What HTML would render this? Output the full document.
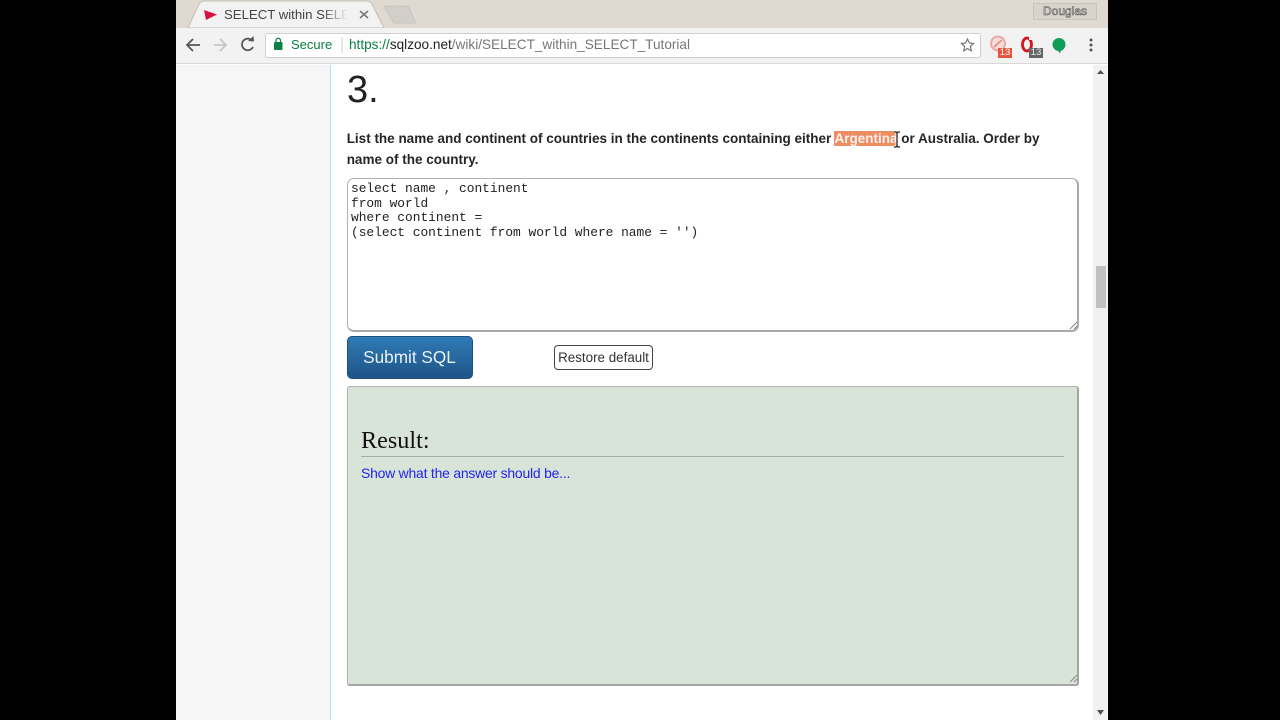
<!DOCTYPE html>
<html><head><meta charset="utf-8">
<style>
html,body{margin:0;padding:0;width:1280px;height:720px;background:#000;overflow:hidden}
div,span,a{position:absolute;white-space:nowrap;box-sizing:border-box}
body{font-family:"Liberation Sans",sans-serif;color:#222}
svg{position:absolute;overflow:visible}
</style></head><body>
<div style="left:176px;top:0;width:932px;height:720px;background:#fff;overflow:hidden">
 <!-- title bar -->
 <div style="left:0;top:0;width:932px;height:28px;background:#dfd9d1"></div>
 <svg style="left:0;top:0" width="932" height="30">
  <path d="M12 28 L22 6 Q24 1 28 1 L191 1 Q195 1 197 6 L208 28 Z" fill="#f2f2f2" stroke="#c4bfb8" stroke-width="1"/>
  <path d="M208 7 Q209 6 212 6 L232 6 L240 23 L218 23 Z" fill="#d2cec9" stroke="#c9c5bf"/>
  <path d="M28 10 L41 14.5 L30 20 Z" fill="#d8123f"/>
  <path d="M184 11 L192 18 M192 11 L184 18" stroke="#777" stroke-width="1.5"/>
 </svg>
 <div style="left:48px;top:6px;width:128px;height:17px;font-size:13.2px;line-height:17px;color:#444;overflow:hidden">SELECT within SELECT Tutorial</div>
 <div style="left:146px;top:5px;width:30px;height:20px;background:linear-gradient(90deg,rgba(242,242,242,0),#f2f2f2 85%)"></div>
 <div style="left:857px;top:3px;width:64px;height:17px;background:#d9d3cb;border:1px solid #c9c3bb;font-size:12px;line-height:15px;text-align:center;color:#f3f0ec;-webkit-text-stroke:.6px #555">Douglas</div>
 <!-- toolbar -->
 <div style="left:0;top:28px;width:932px;height:36px;background:#f2f2f2;border-bottom:1px solid #d8d8d8"></div>
 <svg style="left:0;top:28px" width="932" height="35">
  <path d="M24 17 H11 M17 11 L11 17 L17 23" fill="none" stroke="#555" stroke-width="1.8"/>
  <path d="M38 17 H50 M44 11 L50 17 L44 23" fill="none" stroke="#c6c6c6" stroke-width="1.8"/>
  <path d="M76.5 13 A5.8 5.8 0 1 0 77 19" fill="none" stroke="#555" stroke-width="1.8"/>
  <path d="M72 13 L78 13.5 L77.5 8 Z" fill="#555"/>
 </svg>
 <div style="left:89px;top:33px;width:716px;height:25px;background:#fff;border:1px solid #cfcfcf;border-radius:3px"></div>
 <svg style="left:0;top:28px" width="932" height="35">
  <rect x="98" y="14" width="8.5" height="8" rx="1" fill="#0b8043"/>
  <path d="M100 14 V12.5 A2.2 2.2 0 0 1 104.5 12.5 V14" fill="none" stroke="#0b8043" stroke-width="1.2"/>
  <path d="M166 9.5 V25" stroke="#ccc"/>
  <path d="M791.5 11 L793.4 15 L797.6 15.5 L794.4 18.4 L795.3 22.8 L791.5 20.6 L787.7 22.8 L788.6 18.4 L785.4 15.5 L789.6 15 Z" fill="none" stroke="#777" stroke-width="1.2"/>
  <circle cx="822" cy="15.5" r="7" fill="#f6dcda" stroke="#eaa9a4" stroke-width="2"/>
  <path d="M818 19 L826 12" stroke="#e68a84" stroke-width="1.5"/>
  <rect x="822" y="20" width="14" height="10" fill="#e8553d"/>
  <ellipse cx="851" cy="16.5" rx="4.5" ry="6.5" fill="none" stroke="#d8141f" stroke-width="2.8"/>
  <rect x="853" y="8" width="4" height="4" fill="#f2f2f2"/>
  <rect x="853" y="20" width="14" height="10" fill="#666"/>
  <circle cx="883" cy="16.5" r="6.5" fill="#0f9d58"/>
  <path d="M881 21 L885.5 21 L884 25.5 Z" fill="#0f9d58"/>
  <circle cx="915" cy="12" r="1.5" fill="#555"/><circle cx="915" cy="17" r="1.5" fill="#555"/><circle cx="915" cy="22" r="1.5" fill="#555"/>
 </svg>
 <div style="left:822px;top:48px;width:14px;height:10px;font-size:9.5px;line-height:10px;text-align:center;color:#fff">13</div>
 <div style="left:853px;top:48px;width:14px;height:10px;font-size:9.5px;line-height:10px;text-align:center;color:#eee">13</div>
 <div style="left:115px;top:37px;font-size:13px;line-height:16px;color:#0b8043">Secure</div>
 <div style="left:173px;top:37px;font-size:13.6px;line-height:16px;color:#0b8043">https://<span style="position:static;color:#222">sqlzoo.net</span><span style="position:static;color:#777">/wiki/SELECT_within_SELECT_Tutorial</span></div>

 <!-- page -->
 <div style="left:0;top:65px;width:155px;height:655px;background:#f6f6f6;border-right:1px solid #b5dcf6"></div>
 <div style="left:171px;top:66px;font-size:38px;line-height:48px;color:#222">3.</div>
 <div style="left:170.7px;top:128px;width:730px;font-weight:bold;font-size:13.5px;line-height:21px;color:#252525">
  <span style="position:static">List the name and continent of countries in the continents containing either <span style="position:static;background:#ee8c62;color:#fdf3ee">Argentina</span> or Australia. Order by</span><br>
  <span style="position:static">name of the country.</span>
 </div>
 <svg style="left:715px;top:131px" width="12" height="18"><path d="M3 1 H5 L6 2 L7 1 H9 M6 2 V15 M3 16 H5 L6 15 L7 16 H9" fill="none" stroke="#fff" stroke-width="3"/><path d="M3 1 H5 L6 2 L7 1 H9 M6 2 V15 M3 16 H5 L6 15 L7 16 H9" fill="none" stroke="#222" stroke-width="1.3"/></svg>

 <div style="left:171px;top:178px;width:732px;height:154px;background:#fff;border:1px solid #b5b2ae;border-bottom:2px solid #aaa;border-right:2px solid #aaa;border-radius:7px"></div>
 <div style="left:175px;top:182px;font-family:'Liberation Mono',monospace;font-size:12.87px;line-height:14.6px;color:#222;white-space:pre">select name , continent
from world
where continent =
(select continent from world where name = '')</div>
 <svg style="left:892px;top:320px" width="11" height="11"><path d="M2 9 L9 2 M6 9 L9 6" stroke="#888"/></svg>

 <div style="left:171px;top:336px;width:126px;height:43px;background:linear-gradient(#2f7ab5,#1f5588);border:1px solid #1d4f7f;border-radius:5px;color:#e8f1f8;font-size:17.2px;line-height:40px;text-align:center;text-indent:-1px">Submit SQL</div>
 <div style="left:378px;top:345px;width:99px;height:25px;background:#fff;border:1px solid #444;border-radius:4px;color:#333;font-size:13.4px;line-height:23px;text-align:center">Restore default</div>

 <div style="left:171px;top:386px;width:732px;height:300px;background:#d9e4d8;border:1px solid #b2b2b0;border-bottom:2px solid #a5a5a5;border-right:2px solid #a5a5a5;border-radius:3px"></div>
 <div style="left:185px;top:426px;width:703px;height:31px;border-bottom:1px solid #aaa;font-family:'Liberation Serif',serif;font-size:24.2px;line-height:30px;color:#111">Result:</div>
 <div style="left:185px;top:465px;font-size:13.9px;line-height:16px;color:#2222ee;letter-spacing:-.19px">Show what the answer should be...</div>
 <svg style="left:892px;top:673px" width="11" height="11"><path d="M2 9 L9 2 M6 9 L9 6" stroke="#888"/></svg>

 <!-- scrollbar -->
 <div style="left:917px;top:65px;width:15px;height:655px;background:#f1f1f1"></div>
 <div style="left:920px;top:266px;width:10px;height:42px;background:#c1c1c1"></div>
 <svg style="left:917px;top:64px" width="15" height="656">
  <path d="M4 10 L7.5 6 L11 10 Z" fill="#505050"/>
  <path d="M4 646 L11 646 L7.5 651 Z" fill="#505050"/>
 </svg>
</div>
</body></html>
